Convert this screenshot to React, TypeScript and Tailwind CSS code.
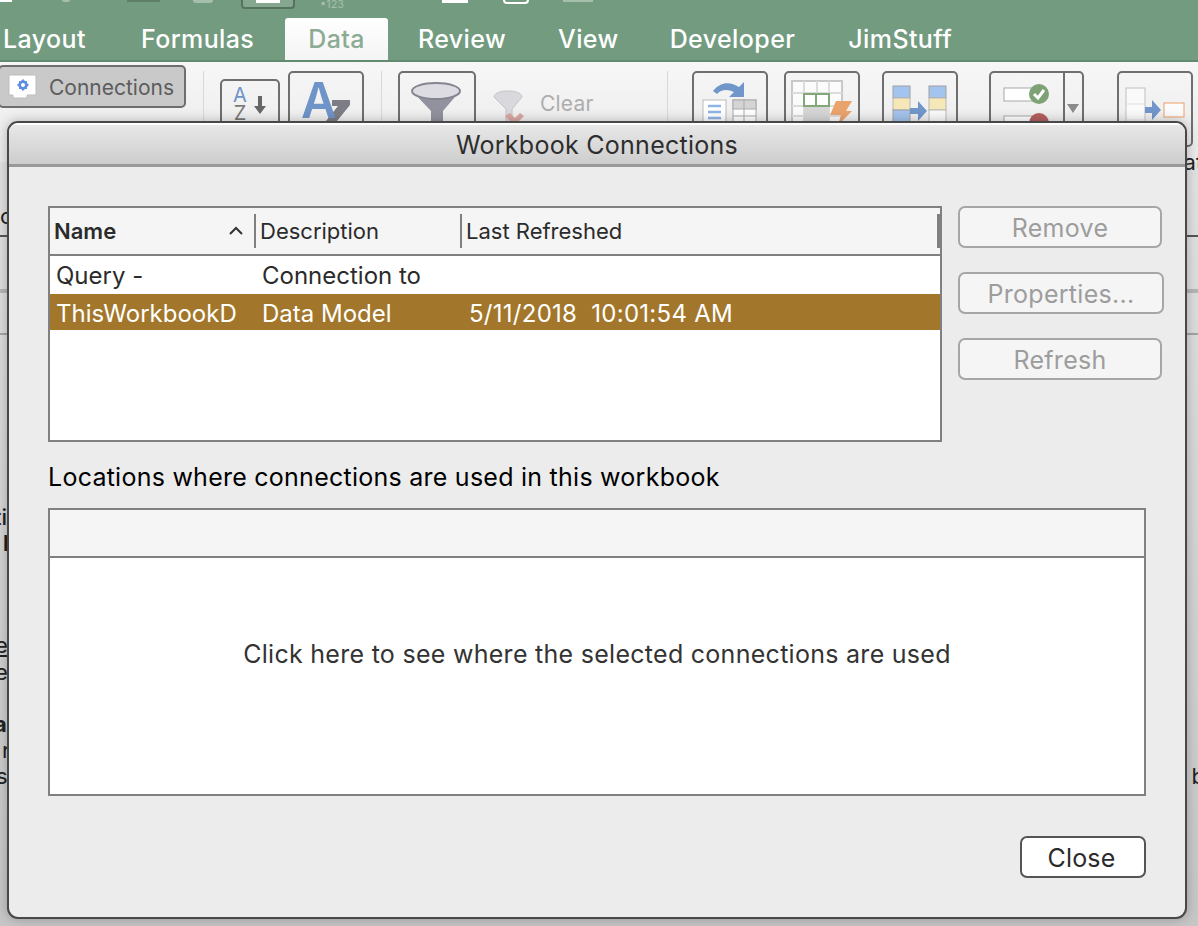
const TABS = [
  { label: "Layout", cls: "pl-[3px] pr-[28px] pt-[2px] flex items-center" },
  { label: "Formulas", cls: "px-[27px] pt-[2px] flex items-center" },
  { label: "Data", cls: "ml-[4px] mr-[3px] px-[23px] pt-[2px] rounded-t-[3px] bg-gradient-to-b from-white to-[#f4f4f4] text-[#8cab95] flex items-center" },
  { label: "Review", cls: "pl-[27px] pr-[25px] pt-[2px] flex items-center" },
  { label: "View", cls: "pl-[27px] pr-[24px] pt-[2px] flex items-center" },
  { label: "Developer", cls: "px-[27px] pt-[2px] flex items-center" },
  { label: "JimStuff", cls: "px-[26px] pt-[2px] flex items-center" },
];

function IconFrame({ left, width, top = 9, children }: { left: number; width: number; top?: number; children?: React.ReactNode }) {
  return (
    <div className="shrink-0 h-[76px] rounded-[5px] border-2 border-[#6f6f6f] overflow-hidden" style={{ marginLeft: left, width, marginTop: top }}>
      {children}
    </div>
  );
}

function Toolbar() {
  return (
    <div className="flex items-start h-[100px]">
      <div className="shrink-0 -ml-[2px] mt-[3px] w-[188px] h-[43px] rounded-[5px] border-2 border-[#6e6e6e] bg-[#c9c9c9] flex items-center pl-[8px] gap-[11px]">
        <svg width="30" height="28" viewBox="0 0 30 28">
          <path d="M1 2h27v20h-9v3H5v-3H1z" fill="#fff" stroke="#bdbdbd" />
          <path d="M15 6l2 2h2v2l2 2-2 2v2h-2l-2 2-2-2h-2v-2l-2-2 2-2V8h2z" fill="#5f8fe0" />
          <circle cx="15" cy="12" r="2" fill="#fff" />
        </svg>
        <span className="mt-[2px] text-[21px] text-[#5c5c5c]">Connections</span>
      </div>
      <div className="shrink-0 ml-[17px] mt-[9px] w-[1px] h-[60px] bg-[#d8d8d8]" />
      <div className="shrink-0 ml-[16px] mt-[17px] w-[60px] h-[60px] rounded-[5px] border-2 border-[#6f6f6f] flex items-start justify-center gap-[6px] pt-[5px]">
        <div className="flex flex-col items-center text-[20px] leading-[18px]">
          <span className="text-[#6f94c8]">A</span>
          <span className="text-[#777]">Z</span>
        </div>
        <svg width="14" height="20" viewBox="0 0 14 20" className="mt-[9px]">
          <path d="M5 1h4v10h4l-6 8-6-8h4z" fill="#666" />
        </svg>
      </div>
      <IconFrame left={8} width={76}>
        <svg width="72" height="50" viewBox="0 0 72 50">
          <path d="M42 27h18v5L47 48H36l12-15h-6z" fill="#7d7d85" />
          <text x="11" y="45" fontSize="49" fontWeight="600" fill="#6f94c8" fontFamily="Inter, sans-serif">A</text>
        </svg>
      </IconFrame>
      <div className="shrink-0 ml-[17px] mt-[9px] w-[1px] h-[60px] bg-[#d8d8d8]" />
      <IconFrame left={16} width={78}>
        <svg width="74" height="50" viewBox="0 0 74 50">
          <path d="M12 18c0-11 48-11 48 0L43 38v12H31V38z" fill="#92929f" />
          <ellipse cx="36" cy="18" rx="24" ry="8" fill="#dcdce2" stroke="#85858f" strokeWidth="2" />
        </svg>
      </IconFrame>
      <div className="shrink-0 ml-[16px] mt-[25px] w-[36px] h-[42px]">
        <svg width="36" height="42" viewBox="0 0 36 42">
          <path d="M2 10c0-8 28-8 28 0L20 22v14h-6V22z" fill="#d9d9dd" stroke="#c4c4c8" />
          <path d="M18 26l5 5 5-5 4 3-5 5 5 5h-18l4-5-5-5z" fill="#dba8a3" />
        </svg>
      </div>
      <span className="shrink-0 ml-[12px] mt-[26px] text-[21px] tracking-[0.2px] text-[#adadad]">Clear</span>
      <div className="shrink-0 ml-[73px] mt-[9px] w-[1px] h-[60px] bg-[#d8d8d8]" />
      <IconFrame left={24} width={76}>
        <svg width="72" height="50" viewBox="0 0 72 50">
          <path d="M19 18c7-9 17-10 26-4l5-5v15H35l5-5c-6-3-13-3-17 2z" fill="#7196c9" />
          <rect x="9" y="27" width="23" height="30" fill="#fff" stroke="#bbb" />
          <path d="M14 33h13M14 39h13M14 45h13" stroke="#8fb4e6" strokeWidth="2.500" />
          <rect x="39" y="27" width="23" height="24" fill="#fff" stroke="#aaa" />
          <rect x="39" y="27" width="23" height="9" fill="#d4d4d4" stroke="#aaa" />
          <path d="M50 27v24M39 43h23" stroke="#aaa" />
        </svg>
      </IconFrame>
      <IconFrame left={16} width={76}>
        <svg width="72" height="50" viewBox="0 0 72 50">
          <rect x="6" y="8" width="50" height="46" fill="#fbfbfb" stroke="#c8c8c8" strokeWidth="2" />
          <path d="M18 8v46M31 8v46M43 8v46M6 20h50M6 33h50M6 43h50" stroke="#dcdcdc" strokeWidth="2" />
          <rect x="18" y="33" width="25" height="20" fill="#d6d6d6" />
          <rect x="18" y="21" width="25" height="12" fill="#fff" stroke="#82a878" strokeWidth="2" />
          <path d="M30 21v12" stroke="#82a878" strokeWidth="2" />
          <path d="M50 28h16l-6 10h6l-14 14 3-10H44z" fill="#eba36c" />
        </svg>
      </IconFrame>
      <IconFrame left={22} width={76}>
        <svg width="72" height="50" viewBox="0 0 72 50">
          <rect x="9" y="13" width="17" height="12" fill="#a3c4ee" stroke="#a0a0a0" />
          <rect x="9" y="25" width="17" height="12" fill="#f6e7b8" stroke="#b8b8b8" />
          <rect x="9" y="37" width="17" height="14" fill="#a3c4ee" stroke="#a0a0a0" />
          <rect x="45" y="13" width="17" height="12" fill="#a3c4ee" stroke="#a0a0a0" />
          <rect x="45" y="25" width="17" height="12" fill="#f6e7b8" stroke="#b8b8b8" />
          <rect x="45" y="37" width="17" height="14" fill="#fafafa" stroke="#b8b8b8" />
          <path d="M26 35h8v-7l9 10-9 10v-7h-8z" fill="#7196c9" />
        </svg>
      </IconFrame>
      <div className="shrink-0 ml-[31px] mt-[9px] w-[95px] h-[76px] rounded-[5px] border-2 border-[#6f6f6f] flex overflow-hidden">
        <div className="w-[74px] border-r-2 border-[#6f6f6f]">
          <svg width="72" height="50" viewBox="0 0 72 50">
            <rect x="13" y="15" width="35" height="13" fill="#fff" stroke="#a8a8a8" />
            <circle cx="48" cy="21" r="10" fill="#7ea274" />
            <path d="M43 21l4 4 6-8" stroke="#fff" strokeWidth="3" fill="none" />
            <rect x="13" y="43" width="35" height="13" fill="#fff" stroke="#a8a8a8" />
            <circle cx="48" cy="50" r="10" fill="#b55e5e" />
          </svg>
        </div>
        <div className="flex-1 flex items-start justify-center pt-[31px]">
          <div className="w-0 h-0 border-x-[6px] border-x-transparent border-t-[9px] border-t-[#8b8b8b]" />
        </div>
      </div>
      <div className="shrink-0 ml-[33px] flex flex-col">
        <IconFrame left={0} width={76}>
          <svg width="72" height="72" viewBox="0 0 72 72">
            <rect x="7" y="15" width="19" height="50" fill="#fafafa" stroke="#c0c0c0" />
            <path d="M7 31h19M7 47h19" stroke="#ddd" />
            <path d="M26 34h7v-7l9 10-9 10v-7h-7z" fill="#7196c9" />
            <rect x="45" y="30" width="20" height="14" fill="#fbfbfb" stroke="#ed9f68" />
          </svg>
        </IconFrame>
        <span className="ml-[67px] mt-[1px] text-[22px] leading-[28px] text-[#222]">at</span>
      </div>
    </div>
  );
}

function SheetFragments() {
  return (
    <div className="flex-1 flex flex-col text-[22px] leading-[26px] text-[#222]">
      <div className="h-[75px] pt-[44px] leading-[20px] border-b-2 border-[#555]">or</div>
      <div className="h-[56px] border-b-4 border-[#b5b5b5]" />
      <div className="h-[42px] border-b-2 border-[#a3a3a3]" />
      <div className="mt-[169px] -ml-[6px] font-medium">ti</div>
      <div className="pl-[3px] font-bold">l</div>
      <div className="mt-[76px] -ml-[5px] underline">e</div>
      <div className="mt-[1px] -ml-[5px]">e</div>
      <div className="mt-[26px] -ml-[6px] font-bold">a</div>
      <div className="pl-[2px]">r</div>
      <div className="flex justify-between">
        <span className="-ml-[4px]">s</span>
        <span className="-mr-[7px]">b</span>
      </div>
    </div>
  );
}

function SideButton({ label, width }: { label: string; width: number }) {
  return (
    <button className="h-[42px] pt-[2px] rounded-[7px] border-2 border-[#a6a6a6] bg-[#f5f5f5] text-[25px] tracking-[0.27px] text-[#9d9d9d]" style={{ width }}>
      {label}
    </button>
  );
}

function Dialog() {
  return (
    <div className="absolute left-[7px] top-[121px] w-[1180px] h-[798px] rounded-[11px] border-2 border-[#484848] bg-[#ececec] shadow-[0_0_12px_rgba(0,0,0,0.25)] overflow-hidden flex flex-col">
      <div className="h-[44px] shrink-0 pt-[2px] border-t-2 border-white border-b-[3px] border-b-[#999] bg-gradient-to-b from-[#e8e8e8] to-[#cdcdcd] flex items-center justify-center text-[25px] tracking-[0.27px] text-[#2d2d2d]">
        Workbook Connections
      </div>
      <div className="flex-1 flex flex-col pl-[39px] pt-[39px] pr-[39px]">
        <div className="flex items-start gap-[16px]">
          <div className="w-[894px] h-[236px] border-2 border-[#808080] bg-white text-[#2b2b2b] shrink-0">
            <div className="h-[48px] border-b-2 border-[#808080] bg-[#f5f5f5] flex items-center text-[22px]">
              <div className="w-[206px] h-[34px] flex items-center justify-between pl-[4px] pr-[10px] border-r-2 border-[#808080] font-semibold">
                <span>Name</span>
                <svg width="16" height="10" viewBox="0 0 16 10"><path d="M2 8l6-6 6 6" fill="none" stroke="#333" strokeWidth="2" /></svg>
              </div>
              <div className="w-[206px] h-[34px] flex items-center pl-[4px] border-r-2 border-[#808080]">Description</div>
              <div className="flex-1 h-[34px] flex items-center pl-[4px] border-r-[3px] border-[#808080]">Last Refreshed</div>
            </div>
            <div className="h-[38px] pt-[1px] flex items-center text-[24px]">
              <span className="w-[212px] pl-[6px]">Query -</span>
              <span>Connection to</span>
            </div>
            <div className="h-[36px] pt-[3px] flex items-center text-[24px] bg-[#a2772b] text-white">
              <span className="w-[212px] pl-[6px]">ThisWorkbookD</span>
              <span className="w-[207px]">Data Model</span>
              <span className="whitespace-pre tracking-[0.27px]">5/11/2018  10:01:54 AM</span>
            </div>
          </div>
          <div className="flex flex-col gap-[24px]">
            <SideButton label="Remove" width={204} />
            <SideButton label="Properties..." width={206} />
            <SideButton label="Refresh" width={204} />
          </div>
        </div>
        <div className="mt-[19px] h-[34px] flex items-center text-[25px] tracking-[0.25px] text-black">Locations where connections are used in this workbook</div>
        <div className="mt-[13px] w-[1098px] h-[288px] border-2 border-[#808080] bg-white flex flex-col">
          <div className="h-[48px] shrink-0 border-b-2 border-[#808080] bg-[#f5f5f5]" />
          <div className="flex-1 pb-[42px] flex items-center justify-center text-[25px] tracking-[0.28px] text-[#333]">Click here to see where the selected connections are used</div>
        </div>
        <div className="mt-[40px] w-[1098px] flex justify-end">
          <button className="w-[126px] h-[42px] pt-[2px] pr-[3px] rounded-[7px] border-2 border-[#555] bg-white text-[25px] tracking-[0.2px] text-[#2b2b2b]">Close</button>
        </div>
      </div>
    </div>
  );
}

export default function App() {
  return (
    <div className="relative w-[1198px] h-[926px] overflow-hidden bg-gradient-to-b from-[#e8e8e8] to-[#c6c6c6] font-['Inter','Liberation_Sans',sans-serif]">
      <div className="h-[62px] bg-[#739b7f] border-b-2 border-[#618a6f] flex flex-col">
        <div className="h-[18px] flex items-start">
          <div className="w-[12px] h-[2px] bg-white" />
          <div className="ml-[50px] w-[8px] h-[2px] rounded-b-full bg-[#a5bfac]" />
          <div className="ml-[57px] w-[33px] h-[2px] bg-[#5f7f69]" />
          <div className="ml-[33px] w-[20px] h-[3px] rounded-b-full bg-[#a5bfac]" />
          <div className="ml-[28px] w-[54px] h-[9px] rounded-b-[4px] border-2 border-t-0 border-[#56735f] bg-[#86a78f] flex justify-center">
            <div className="w-[24px] h-[3px] bg-white" />
          </div>
          <span className="ml-[25px] text-[11px] leading-[8px] text-[#a5bfac]">▪123</span>
          <div className="ml-[98px] w-[26px] h-[3px] bg-white" />
          <div className="ml-[35px] w-[26px] h-[4px] rounded-b-full border-2 border-t-0 border-white" />
          <div className="ml-[34px] w-[30px] h-[2px] bg-[#a5bfac]" />
        </div>
        <div className="flex-1 flex items-stretch text-[25px] font-medium tracking-[0.4px] text-white">
          {TABS.map(t => (
            <div key={t.label} className={t.cls}>
              {t.label}
            </div>
          ))}
        </div>
      </div>
      <div className="bg-gradient-to-b from-[#f7f7f7] to-[#e9e9e9] h-[100px] overflow-visible">
        <Toolbar />
      </div>
      <div className="h-[764px] flex">
        <SheetFragments />
      </div>
      <Dialog />
    </div>
  );
}
